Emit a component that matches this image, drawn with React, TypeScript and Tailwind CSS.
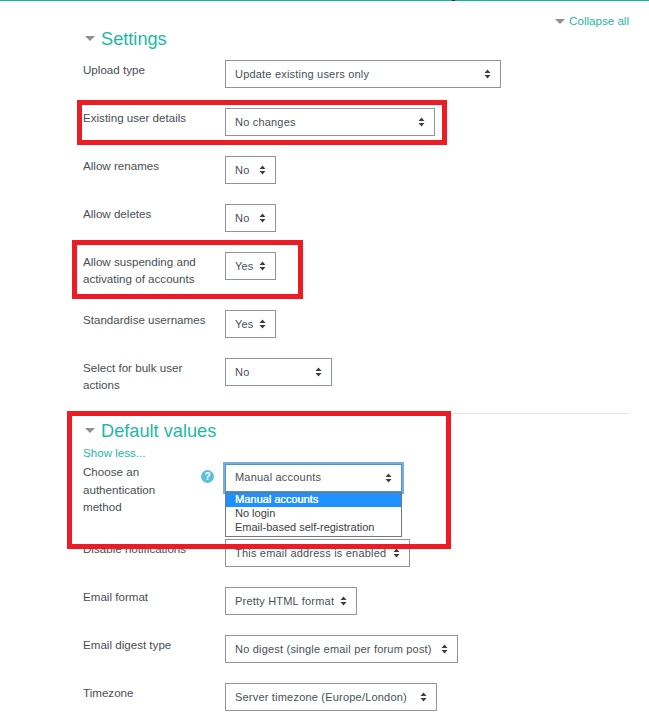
const Arrows = () => (
  <svg width="7" height="10" viewBox="0 0 7 10" className="shrink-0">
    <path d="M3.5 0.5 L6.5 4 H0.5 Z M0.5 6 H6.5 L3.5 9.5 Z" fill="#3a3f45" />
  </svg>
);

const Tri = () => (
  <svg width="10" height="5" viewBox="0 0 10 5" className="shrink-0">
    <path d="M0 0 H10 L5 5 Z" fill="#8f8f8f" />
  </svg>
);

function Select({ text, w, focus }: { text: string; w: string; focus?: boolean }) {
  return (
    <div
      className={`${w} h-7 flex items-center justify-between pl-[9px] pr-[9px] bg-white border text-[11px] tracking-[0.2px] text-[#495057] shrink-0 ${
        focus ? "outline-2 outline-[#78aede] border-[#4f94d8] pb-px" : "border-[#8f959e]"
      }`}
    >
      <span className="whitespace-nowrap">{text}</span>
      <Arrows />
    </div>
  );
}

function Row({ label, text, w, mb = "mb-5" }: { label: string; text: string; w: string; mb?: string }) {
  return (
    <div className={`flex ${mb}`}>
      <div className="w-[142px] pt-px pb-[3px] pr-[10px] text-[11.6px] leading-[17px] text-[#4a4e53]">{label}</div>
      <Select text={text} w={w} />
    </div>
  );
}

function Heading({ children }: { children: string }) {
  return (
    <div className="flex items-center h-6 pl-[2px] gap-[6px]">
      <Tri />
      <span className="pt-[2px] text-[18.2px] leading-6 text-[#1fb8a6]">{children}</span>
    </div>
  );
}

function Box({ className }: { className: string }) {
  return <div className={`absolute border-[5px] border-[#ed1c24] pointer-events-none ${className}`} />;
}

export default function App() {
  return (
    <div
      className="relative w-[649px] h-[725px] overflow-hidden bg-white"
      style={{ fontFamily: '"Liberation Sans", Arial, sans-serif' }}
    >
      <div className="h-px bg-[#17b3a3]" />
      <div className="absolute left-[452px] top-0 w-[3px] h-px bg-[#2b2b2b]" />
      <div className="flex justify-end items-center gap-1 pr-5 mt-[14px] h-[12px] text-[11.6px] text-[#1fb8a6]">
        <Tri />
        <span>Collapse all</span>
      </div>

      <div className="pl-[83px] pr-[21px] -mt-px">
        <Heading>Settings</Heading>
        <div className="mt-[10px]">
          <Row label="Upload type" text="Update existing users only" w="w-[276px]" />
          <Row label="Existing user details" text="No changes" w="w-[210px]" />
          <Row label="Allow renames" text="No" w="w-[51px]" />
          <Row label="Allow deletes" text="No" w="w-[51px]" />
          <Row label="Allow suspending and activating of accounts" text="Yes" w="w-[51px]" />
          <Row label="Standardise usernames" text="Yes" w="w-[51px]" />
          <Row label="Select for bulk user actions" text="No" w="w-[107px]" mb="mb-[17px]" />
        </div>

        <div className="border-t border-[#e3e3e3] pt-[4px]">
          <Heading>Default values</Heading>
          <div className="mt-[2px] text-[11.6px] leading-[17px] text-[#1fb8a6]">Show less...</div>
          <div className="flex mt-[3px] h-[75px]">
            <div className="w-[118px] -mt-px pr-5 text-[11.6px] leading-[17.5px] text-[#4a4e53]">
              Choose an authentication method
            </div>
            <div className="w-[24px] pt-[6px]">
              <div className="w-[13px] h-[13px] rounded-full bg-[#5bc0de] flex items-center justify-center text-white text-[10px] font-bold leading-none">
                ?
              </div>
            </div>
            <Select text="Manual accounts" w="w-[177px]" focus />
          </div>
          <Row label="Disable notifications" text="This email address is enabled" w="w-[185px]" />
          <Row label="Email format" text="Pretty HTML format" w="w-[132px]" />
          <Row label="Email digest type" text="No digest (single email per forum post)" w="w-[233px]" />
          <Row label="Timezone" text="Server timezone (Europe/London)" w="w-[212px]" />
        </div>
      </div>

      <div className="absolute left-[225px] top-[492px] w-[177px] h-[45px] bg-white border border-[#767676] text-[11px] leading-[12px] text-[#3c4043]">
        <div className="h-[14px] bg-[#1e90ff] text-white pl-[9px] [text-shadow:0.3px_0_0_white]">Manual accounts</div>
        <div className="h-[14px] pl-[9px]">No login</div>
        <div className="h-[14px] pl-[9px]">Email-based self-registration</div>
      </div>

      <Box className="left-[77px] top-[100px] w-[370px] h-[45px]" />
      <Box className="left-[72px] top-[240px] w-[231px] h-[59px]" />
      <Box className="left-[67px] top-[411px] w-[384px] h-[138px]" />
    </div>
  );
}
